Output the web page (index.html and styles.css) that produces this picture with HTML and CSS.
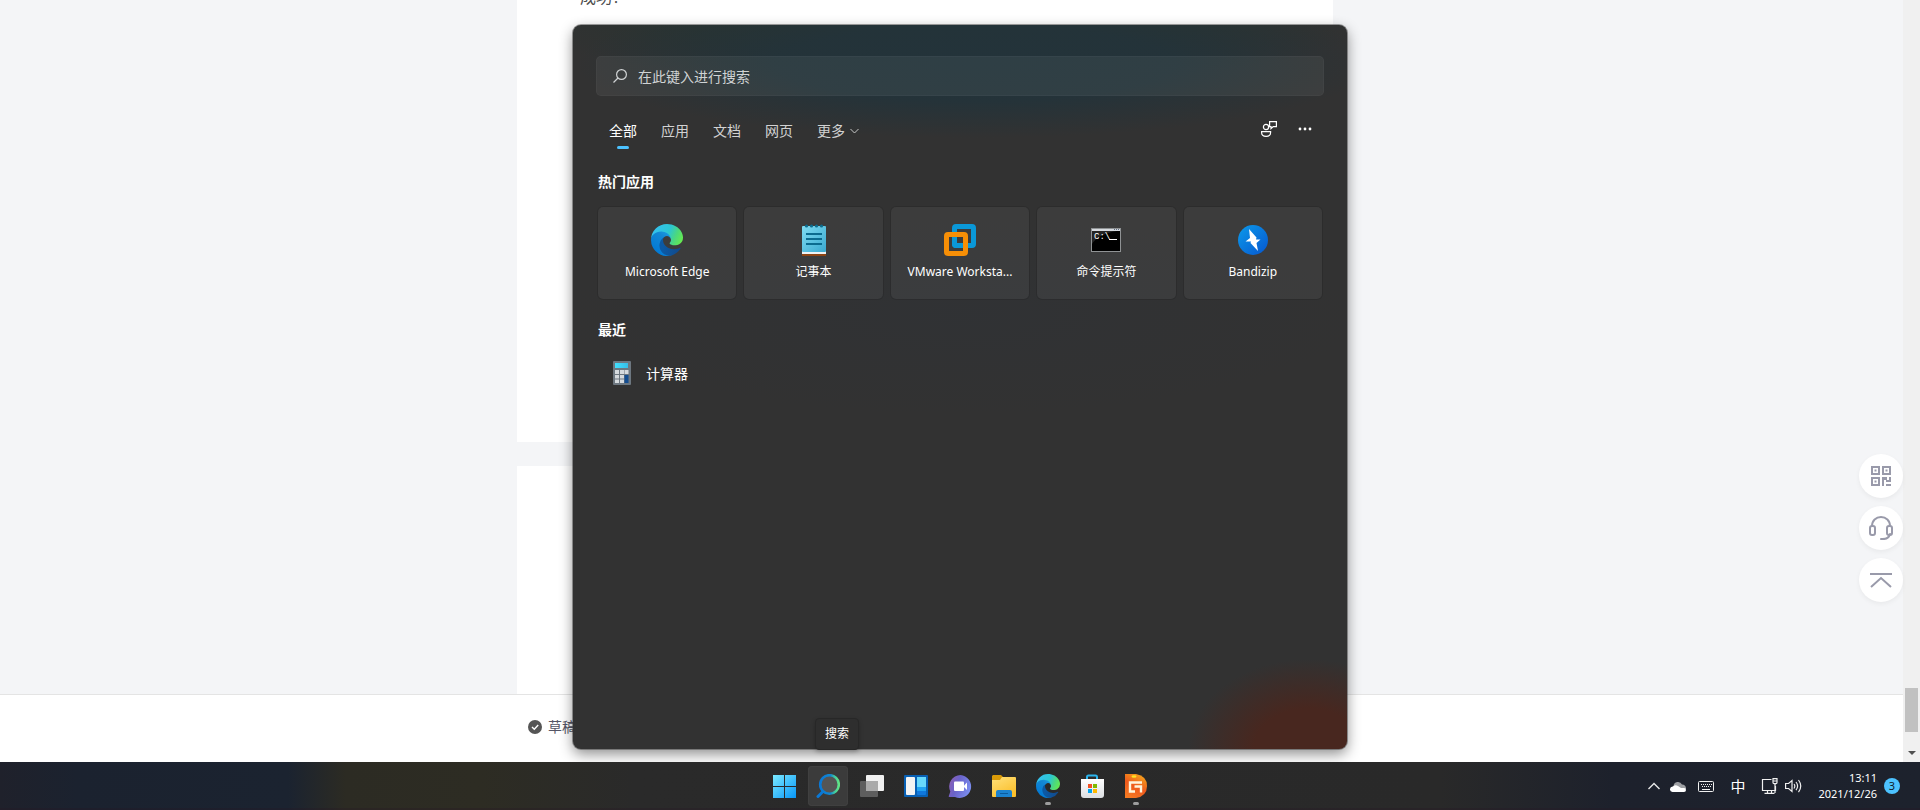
FILE: index.html
```
<!DOCTYPE html>
<html lang="zh-CN">
<head>
  <meta charset="UTF-8">
  <title>搜索</title>
  <link rel="stylesheet" href="styles.css">
</head>
<body>

  <svg class="defs" aria-hidden="true">
    <defs>
      <linearGradient id="edgeDark" x1="0.2" y1="0.5" x2="1" y2="0.6">
        <stop offset="0" stop-color="#0c59a4"/>
        <stop offset="1" stop-color="#114a8b"/>
      </linearGradient>
      <linearGradient id="edgeMid" x1="0.9" y1="0.1" x2="0.3" y2="1">
        <stop offset="0" stop-color="#1b9de2"/>
        <stop offset="0.3" stop-color="#1387d4"/>
        <stop offset="1" stop-color="#0078d4"/>
      </linearGradient>
      <linearGradient id="edgeTop" x1="0" y1="0.4" x2="1" y2="0.7">
        <stop offset="0" stop-color="#35c1f1"/>
        <stop offset="0.5" stop-color="#2cc6d2"/>
        <stop offset="0.75" stop-color="#4bd87f"/>
        <stop offset="1" stop-color="#66eb4e"/>
      </linearGradient>
      <symbol id="edge" viewBox="0 0 256 256">
        <path fill="url(#edgeDark)" d="M231 190.5c-3.4 1.8-6.9 3.4-10.5 4.7a101.5 101.5 0 0 1-35.9 6.4c-47.3 0-88.5-32.5-88.5-74.3 0-11.4 6.4-21.9 16.4-27.2-42.8 1.8-53.8 46.4-53.8 72.5 0 74 68.1 81.4 82.8 81.4 7.9 0 19.8-2.3 27-4.6l1.3-.4a128.3 128.3 0 0 0 66.6-52.8 4 4 0 0 0-5.4-5.7z"/>
        <path fill="url(#edgeMid)" d="M105.7 241.4a79.2 79.2 0 0 1-22.7-21.3 80.7 80.7 0 0 1 29.5-120c3.2-1.5 8.5-4.1 15.6-4a32.4 32.4 0 0 1 25.7 13 31.9 31.9 0 0 1 6.3 18.7c0-.2 24.5-79.6-80-79.6-43.9 0-80 41.6-80 78.2a130.2 130.2 0 0 0 12.1 56 128 128 0 0 0 156.4 67 75.5 75.5 0 0 1-62.8-8z"/>
        <path fill="url(#edgeTop)" d="M152.3 148.9c-.8 1-3.3 2.5-3.3 5.7 0 2.6 1.7 5.1 4.7 7.2 14.4 10 41.5 8.7 41.6 8.7a59.6 59.6 0 0 0 30.3-8.4 61.4 61.4 0 0 0 30.4-52.9c.3-22.4-8-37.3-11.3-43.9C223.5 23.9 177.7 0 128 0A128 128 0 0 0 0 126.2c.5-36.5 36.8-66 80-66 3.5 0 23.5.3 42 10 16.3 8.6 24.9 19 30.8 29.2 6.2 10.7 7.3 24.1 7.3 29.5 0 5.3-2.7 13.3-7.8 19.9z"/>
      </symbol>
      <linearGradient id="note" x1="0" y1="0" x2="1" y2="1">
        <stop offset="0" stop-color="#7fdcf2"/>
        <stop offset="1" stop-color="#3aa9d0"/>
      </linearGradient>
      <linearGradient id="calc" x1="0" y1="0" x2="1" y2="0">
        <stop offset="0" stop-color="#41e0ff"/>
        <stop offset="1" stop-color="#36bde6"/>
      </linearGradient>
      <linearGradient id="bandi" x1="0" y1="0" x2="1" y2="1">
        <stop offset="0" stop-color="#0c9aea"/>
        <stop offset="1" stop-color="#0656cf"/>
      </linearGradient>
      <linearGradient id="win" x1="0" y1="0" x2="1" y2="1">
        <stop offset="0" stop-color="#7beaff"/>
        <stop offset="1" stop-color="#0796f8"/>
      </linearGradient>
      <linearGradient id="lens" x1="0" y1="0.5" x2="1" y2="0.5">
        <stop offset="0" stop-color="#0a78d6"/>
        <stop offset="0.55" stop-color="#1186cf"/>
        <stop offset="0.8" stop-color="#45cf9d"/>
        <stop offset="1" stop-color="#62e385"/>
      </linearGradient>
      <linearGradient id="chat" x1="0" y1="0.2" x2="1" y2="0.6">
        <stop offset="0" stop-color="#8d5fb4"/>
        <stop offset="0.4" stop-color="#6a62c9"/>
        <stop offset="1" stop-color="#7b8ff0"/>
      </linearGradient>
      <linearGradient id="folder" x1="0" y1="0" x2="0.6" y2="1">
        <stop offset="0" stop-color="#ffe07a"/>
        <stop offset="1" stop-color="#fbc02d"/>
      </linearGradient>
      <linearGradient id="bag" x1="0" y1="0" x2="0" y2="1">
        <stop offset="0" stop-color="#ffffff"/>
        <stop offset="1" stop-color="#dcdfe2"/>
      </linearGradient>
      <linearGradient id="diskg" x1="0.7" y1="0" x2="0.2" y2="1">
        <stop offset="0" stop-color="#f6a21c"/>
        <stop offset="0.5" stop-color="#ee5a1c"/>
        <stop offset="1" stop-color="#f57a22"/>
      </linearGradient>
    </defs>
  </svg>

  <main class="browser">
    <div class="page">
      <div class="content">
        <article class="card first"><p>成功！</p></article>
        <section class="card last"></section>
      </div>
      <footer class="draft-bar">
        <div class="draft">
          <svg width="14" height="14" viewBox="0 0 14 14"><circle cx="7" cy="7" r="7" fill="#555"/><path d="M4 7l2.300 2.300L10.200 5" fill="none" stroke="#fff" stroke-width="1.400"/></svg>
          <span>草稿</span>
        </div>
      </footer>
      <nav class="float-tools">
        <button type="button" aria-label="二维码">
          <svg width="20" height="20" viewBox="0 0 20 20" fill="none" stroke="#999aaa" stroke-width="2">
            <path d="M1 1h7v7H1zM12 1h7v7h-7zM1 12h7v7H1z"/>
            <path fill="#999aaa" stroke="none" d="M3.500 3.500h2v2h-2zM14.500 3.500h2v2h-2zM3.500 14.500h2v2h-2zM11 11h5v3h2v-3h2v5h-5v-2h-2v6h-2zM15 18h5v2h-5z"/>
          </svg>
        </button>
        <button type="button" aria-label="客服">
          <svg width="24" height="24" viewBox="0 0 24 24" fill="none" stroke="#999aaa" stroke-width="2" stroke-linecap="round">
            <path d="M3 10C3 4.500 7 1 12 1s9 3.500 9 9M21 18c-1 4-4 5.500-9 5"/>
            <rect x="1" y="10" width="5" height="9" rx="2"/>
            <rect x="18" y="10" width="5" height="9" rx="2"/>
          </svg>
        </button>
        <button type="button" aria-label="返回顶部">
          <svg width="22" height="16" viewBox="0 0 22 16" fill="none" stroke="#999aaa" stroke-width="2"><path d="M0 2h22M1 15L11 6l10 9"/></svg>
        </button>
      </nav>
    </div>
    <div class="scrollbar">
      <div class="thumb"></div>
      <svg width="8" height="4" viewBox="0 0 8 4"><path d="M0 0h8L4 4z" fill="#505050"/></svg>
    </div>

    <div class="overlay">
      <section class="panel">
        <div class="search-box">
          <svg width="14" height="14" viewBox="0 0 14 14" fill="none" stroke="#d0d3d4" stroke-width="1.200"><circle cx="8.500" cy="5.500" r="4.900"/><path d="M5 9L.5 13.500"/></svg>
          <input type="text" aria-label="搜索" placeholder="在此键入进行搜索">
        </div>

        <div class="filter-row">
          <nav class="tabs">
            <button type="button" class="tab active">全部</button>
            <button type="button" class="tab">应用</button>
            <button type="button" class="tab">文档</button>
            <button type="button" class="tab">网页</button>
            <button type="button" class="tab">更多<svg width="9" height="6" viewBox="0 0 9 6" fill="none" stroke="#c8c8c8"><path d="M.5 1l4 4 4-4"/></svg></button>
          </nav>
          <div class="actions">
            <button type="button" aria-label="反馈">
              <svg width="16" height="16" viewBox="0 0 16 16" fill="none" stroke="#fff" stroke-width="1.200">
                <circle cx="5" cy="6" r="2.600"/>
                <path d="M.6 10.600h9v1c0 2.200-1.600 3.800-4.500 3.800S.6 13.800.6 11.600zM8.600.6h6.800v5h-3.200L10 7.600v-2H8.600z"/>
              </svg>
            </button>
            <button type="button" aria-label="选项">
              <svg width="14" height="4" viewBox="0 0 14 4" fill="#fff"><circle cx="2" cy="2" r="1.400"/><circle cx="7" cy="2" r="1.400"/><circle cx="12" cy="2" r="1.400"/></svg>
            </button>
          </div>
        </div>

        <h2>热门应用</h2>
        <div class="tiles">
          <a class="tile" href="#">
            <svg width="32" height="32"><use href="#edge"/></svg>
            <span>Microsoft Edge</span>
          </a>
          <a class="tile" href="#">
            <svg width="32" height="32" viewBox="0 0 32 32">
              <path fill="#8d4413" d="M4 28h24v4H4z"/><path fill="#eef2f4" d="M4 26h24v4H4z"/>
              <rect x="4" y="2" width="24" height="26" rx="1" fill="url(#note)"/>
              <path stroke="#0b6b8f" stroke-width="2" d="M8 10h16M8 15h16M8 20h16"/>
              <g fill="#0d6c8d"><circle cx="8.500" cy="2" r="1.600"/><circle cx="13.500" cy="2" r="1.600"/><circle cx="18.500" cy="2" r="1.600"/><circle cx="23.500" cy="2" r="1.600"/></g>
            </svg>
            <span>记事本</span>
          </a>
          <a class="tile" href="#">
            <svg width="32" height="32" viewBox="0 0 32 32" fill="none" stroke-width="5">
              <rect x="10.500" y="2.500" width="19" height="19" rx="1.500" stroke="#0a98d8"/>
              <rect x="2.500" y="10.500" width="19" height="19" rx="1.500" stroke="#f78f06"/>
              <path stroke="#0a98d8" d="M10.500 13v7q0 1.500 1.500 1.500h3"/>
            </svg>
            <span>VMware Worksta...</span>
          </a>
          <a class="tile" href="#">
            <svg width="32" height="32" viewBox="0 0 32 32">
              <rect x="1.500" y="4.500" width="29" height="23" fill="#000" stroke="#8f9294"/>
              <path fill="#d6dadf" d="M2 5h28v2H2z"/>
              <path fill="#333" d="M2 7h25Q8 10 2 20z" opacity=".7"/>
              <path fill="#5f6c80" d="M24 5h1v1h-1zM26 5h1v1h-1zM28 5h1v1h-1z"/>
              <text x="4" y="15" class="prompt">C:\</text>
              <path stroke="#fff" d="M19 15.500h8"/>
            </svg>
            <span>命令提示符</span>
          </a>
          <a class="tile" href="#">
            <svg width="32" height="32" viewBox="0 0 32 32">
              <circle cx="16" cy="16" r="15" fill="url(#bandi)"/>
              <path fill="#fff" d="M12 5l7.500 8.500-.5 2h4.500L19.500 19 21 27l-7.500-8 .5-1.500H8.500L13 14z"/>
            </svg>
            <span>Bandizip</span>
          </a>
        </div>

        <h2>最近</h2>
        <a class="recent" href="#">
          <svg width="18" height="24" viewBox="0 0 18 24">
            <rect width="18" height="24" rx="1" fill="#6d7780"/>
            <rect x="2" y="2" width="13" height="5" fill="url(#calc)"/>
            <path fill="#d5dade" d="M2 9h4v4H2zM7 9h4v4H7zM11.500 9h4v4h-4zM2 14h4v3.500H2zM7 14h4v3.500H7zM2 18.500h4V22H2zM7 18.500h4V22H7z"/>
            <path fill="#134d91" d="M11.500 14h4v8h-4z"/>
          </svg>
          <span>计算器</span>
        </a>
      </section>
    </div>
  </main>

  <footer class="taskbar">
    <nav class="apps">
      <button type="button" aria-label="开始">
        <svg width="24" height="24" viewBox="0 0 24 24"><path fill="url(#win)" d="M1 1h11v11H1zM13 1h11v11H13zM1 13h11v11H1zM13 13h11v11H13z"/></svg>
      </button>
      <button type="button" class="selected" aria-label="搜索">
        <span class="tooltip">搜索</span>
        <svg width="24" height="24" viewBox="0 0 24 24" fill="none">
          <path d="M7.500 17L2 22.500" stroke="#0a78d6" stroke-width="3" stroke-linecap="round"/>
          <circle cx="13.500" cy="10.500" r="9.300" fill="#555" stroke="url(#lens)" stroke-width="2.600"/>
        </svg>
      </button>
      <button type="button" aria-label="任务视图">
        <svg width="24" height="22" viewBox="0 0 24 22"><rect x="6" width="18" height="16" rx="1" fill="#f1f1f1"/><rect y="6" width="18" height="16" rx="1" fill="#5e5e5e"/><path d="M6 6h12v10H6z" fill="#aaa"/></svg>
      </button>
      <button type="button" aria-label="小组件">
        <svg width="24" height="22" viewBox="0 0 24 22"><rect width="24" height="22" rx="1" fill="#0860b4"/><rect x="2" y="2" width="9" height="18" rx="1" fill="#f3f3f3"/><rect x="13" y="2" width="9" height="18" rx="1" fill="#0f78dd"/><path d="M13 2h9v10h-9z" fill="#67d8fb"/><path d="M13 12h9v4h-9z" fill="#21a3f2"/></svg>
      </button>
      <button type="button" aria-label="聊天">
        <svg width="24" height="24" viewBox="0 0 24 24"><path fill="url(#chat)" d="M12.500 1A11.500 11.500 0 1 1 7 23H1.500q-1 0-.7-1L2.300 17.500A11.500 11.500 0 0 1 12.500 1z"/><rect x="6" y="7.500" width="10" height="9.500" rx="1" fill="#fff"/><path fill="#fff" d="M16 11.500l3-3v7.500l-3-3z"/></svg>
      </button>
      <button type="button" aria-label="文件资源管理器">
        <svg width="24" height="22" viewBox="0 0 24 22"><path fill="#d99a08" d="M1 0h8l2 2v4H0V1z"/><path fill="url(#folder)" d="M10 2h13q1 0 1 1v18q0 1-1 1H1q-1 0-1-1V5h8z"/><path fill="#1b82cf" d="M4 22v-5q0-2 2-2h12q2 0 2 2v5z"/><path stroke="#0b5b9d" d="M8 18.500h8"/></svg>
      </button>
      <button type="button" class="running" aria-label="Microsoft Edge">
        <svg width="24" height="24"><use href="#edge"/></svg>
      </button>
      <button type="button" aria-label="Microsoft Store">
        <svg width="24" height="24" viewBox="0 0 24 24"><path fill="none" stroke="#2cb5ee" stroke-width="2" d="M7 6V3q0-1.500 1.500-1.500h7Q17 1.500 17 3v3"/><path fill="url(#bag)" d="M1 5h23v16q0 3-3 3H4q-3 0-3-3z"/><path fill="#f25022" d="M8 10h4v4H8z"/><path fill="#7fba00" d="M13 10h4v4h-4z"/><path fill="#00a4ef" d="M8 15h4v4H8z"/><path fill="#ffb900" d="M13 15h4v4h-4z"/></svg>
      </button>
      <button type="button" class="running" aria-label="DiskGenius">
        <svg width="24" height="24" viewBox="0 0 24 24"><path fill="url(#diskg)" d="M1 0h11q11 2 11 12t-11 12H1z"/><ellipse cx="10" cy="2.500" rx="2.500" ry="1.200" fill="#ffe326"/><path fill="none" stroke="#fff5dc" stroke-width="2.400" d="M18 8.500H6v9h5M10.500 12.500h6.500v6"/></svg>
      </button>
    </nav>

    <div class="tray">
      <button type="button" aria-label="显示隐藏的图标"><svg width="12" height="8" viewBox="0 0 12 8" fill="none" stroke="#e8e8e8" stroke-width="1.400"><path d="M.5 7L6 1.500 11.500 7"/></svg></button>
      <svg width="16" height="11" viewBox="0 0 16 11"><path fill="#9d9fa3" d="M3.500 5A4.500 4.500 0 0 1 12 3.500 4 4 0 0 1 16 8H2z"/><path fill="#fff" d="M2.500 11A2.700 2.700 0 0 1 3 5.500 4 4 0 0 1 8 5l3 2h3a2 2 0 0 1 0 4z"/></svg>
      <svg class="keyboard" width="16" height="11" viewBox="0 0 16 11" fill="none" stroke="#f0f0f0"><rect x=".5" y=".5" width="15" height="10" rx="1"/><path stroke-dasharray="1 1" d="M3 3.500h11M4 5.500h9"/><path d="M4 8.500h8"/></svg>
      <button type="button" class="ime">中</button>
      <svg width="17" height="16" viewBox="0 0 17 16" fill="none" stroke="#f0f0f0" stroke-width="1.200"><path d="M10.500 1.500h-9v11h13V8M6.500 12.500v2.500M10.500 12.500v2.500M3.500 15.400h10M12 .6h4v4q0 1-1 1h-2q-1 0-1-1zM12 3h4M14 5.600V15"/></svg>
      <svg class="speaker" width="17" height="14" viewBox="0 0 17 14" fill="none" stroke="#f0f0f0" stroke-width="1.200"><path d="M.6 4.500h3L7 1.500v11l-3.400-3h-3zM9 5q1.600 2 0 4.500M11 3q3.200 4 0 8.200M13.500 1q4.500 6 0 12.200"/></svg>
      <div class="clock"><span>13:11</span><span>2021/12/26</span></div>
      <span class="badge">3</span>
    </div>
  </footer>

</body>
</html>
```
FILE: styles.css
```
* {
  margin: 0;
  padding: 0;
  box-sizing: border-box;
}
body {
  font-family: "Noto Sans", "Noto Sans CJK SC", sans-serif;
  font-size: 14px;
  height: 100vh;
  display: flex;
  flex-direction: column;
  overflow: hidden;
}
svg {
  display: block;
  flex-shrink: 0;
}
button {
  background: none;
  border: none;
  font: inherit;
  color: inherit;
  cursor: pointer;
}
a {
  color: inherit;
  text-decoration: none;
}
.defs {
  position: absolute;
  width: 0;
  height: 0;
}

/* page behind the panel */
.browser {
  flex: 1;
  min-height: 0;
  display: flex;
  position: relative;
}
.page {
  flex: 1;
  display: flex;
  flex-direction: column;
  background: #f4f5f7;
  position: relative;
}
.content {
  flex: 1;
  min-height: 0;
  overflow: hidden;
  display: flex;
  flex-direction: column;
  align-items: center;
  gap: 24px;
  padding-right: 53px;
}
.card {
  width: 100%;
  max-width: 816px;
  background: #fff;
}
.card.first {
  min-height: 457px;
  margin-top: -15px;
  padding: 0 63px;
  font-size: 16px;
  line-height: 24px;
  color: #4d4d4d;
}
.card.last {
  flex: 1;
}
.draft-bar {
  border-top: 1px solid #e4e4e4;
  background: #fff;
  display: flex;
  justify-content: center;
  padding: 21px 53px 25px 0;
}
.draft {
  width: 100%;
  max-width: 816px;
  padding-left: 11px;
  display: flex;
  align-items: center;
  gap: 6px;
  line-height: 21px;
  color: #555666;
}
.float-tools {
  position: absolute;
  right: 0;
  bottom: 160px;
  display: flex;
  flex-direction: column;
  gap: 8px;
}
.float-tools button {
  width: 44px;
  height: 44px;
  border-radius: 50%;
  background: #fff;
  box-shadow: 0 2px 5px rgba(0, 0, 0, 0.05);
  display: flex;
  align-items: center;
  justify-content: center;
}
.scrollbar {
  width: 17px;
  background: #f0f0f0;
  display: flex;
  flex-direction: column;
  justify-content: flex-end;
  align-items: center;
  gap: 19px;
  padding-bottom: 7px;
}
.thumb {
  width: 13px;
  height: 44px;
  background: #c1c1c1;
}

/* search panel */
.overlay {
  position: absolute;
  inset: 0;
  display: flex;
  justify-content: center;
  padding: 25px 20px 13px;
  overflow: hidden;
  pointer-events: none;
}
.panel {
  width: 100%;
  max-width: 774px;
  padding: 31px 23px;
  border-radius: 8px;
  color: #fff;
  pointer-events: auto;
  background:
    radial-gradient(ellipse 120px 90px at 95% 100%, #48271f 0%, #48271f 45%, rgba(72, 39, 31, 0) 100%),
    radial-gradient(ellipse 400px 75px at 52% 38px, #23333a 0%, rgba(35, 51, 58, 0.9) 50%, rgba(35, 51, 58, 0) 100%),
    radial-gradient(ellipse 420px 60px at 48% 0, #283330 0%, rgba(40, 51, 48, 0.8) 60%, rgba(40, 51, 48, 0) 100%),
    radial-gradient(ellipse 400px 100px at 50% 290px, rgba(47, 50, 54, 0.6), rgba(47, 50, 54, 0)),
    #323232;
  box-shadow: 0 0 0 1px rgba(70, 70, 70, 0.5), 0 5px 14px rgba(0, 0, 0, 0.45);
}
.search-box {
  height: 40px;
  padding: 0 16px;
  display: flex;
  align-items: center;
  gap: 11px;
  border: 1px solid rgba(255, 255, 255, 0.03);
  border-radius: 5px;
  background: rgba(255, 255, 255, 0.06);
}
.search-box input {
  flex: 1;
  background: none;
  border: none;
  outline: none;
  font: inherit;
  color: #fff;
}
.search-box input::placeholder {
  color: #d0d3d4;
}
.filter-row {
  margin-top: 15px;
  padding: 0 10px 0 13px;
  display: flex;
  justify-content: space-between;
}
.tabs {
  display: flex;
  gap: 24px;
}
.tab {
  height: 40px;
  line-height: 40px;
  display: flex;
  align-items: center;
  gap: 5px;
  color: #d2d2d2;
  position: relative;
}
.tab.active {
  color: #fff;
}
.tab.active::after {
  content: "";
  position: absolute;
  left: 8px;
  bottom: 2px;
  width: 12px;
  height: 3px;
  border-radius: 2px;
  background: #4cc2ff;
}
.actions {
  height: 36px;
  display: flex;
  align-items: center;
  gap: 17px;
}
.actions button {
  padding: 2px;
}
h2 {
  margin: 21px 2px 15px;
  font-size: 14px;
  line-height: 20px;
  font-weight: 700;
}
.tiles {
  display: grid;
  grid-template-columns: repeat(5, 1fr);
  gap: 8px;
  margin: 0 2px;
}
.tile {
  height: 92px;
  padding-top: 17px;
  display: flex;
  flex-direction: column;
  align-items: center;
  gap: 6px;
  border-radius: 5px;
  background: rgba(255, 255, 255, 0.05);
  box-shadow: 0 0 0 1px rgba(0, 0, 0, 0.1);
  font-size: 12px;
  line-height: 20px;
  white-space: nowrap;
}
.prompt {
  font-family: "Liberation Mono", monospace;
  font-size: 9px;
  fill: #fff;
}
.recent {
  height: 36px;
  padding-left: 17px;
  display: flex;
  align-items: center;
  gap: 15px;
}

/* taskbar */
.taskbar {
  height: 48px;
  display: grid;
  grid-template-columns: 1fr auto 1fr;
  align-items: center;
  color: #fff;
  background: linear-gradient(90deg, #1f212b 0, #1b222f 4%, #1b2330 15%, #2c2b23 18%, #2d2c23 25%, #2a2a2a 33%, #292929 75%, #1d212c 84%, #1d222d 100%);
  box-shadow: inset 0 -2px rgba(40, 22, 38, 0.3);
}
.apps {
  grid-column: 2;
  display: flex;
  gap: 4px;
}
.apps button {
  width: 40px;
  height: 40px;
  border-radius: 4px;
  display: flex;
  align-items: center;
  justify-content: center;
  position: relative;
}
.apps .selected {
  background: #3b3b3b;
  box-shadow: inset 0 0 0 1px #404040;
}
.apps .running::after {
  content: "";
  position: absolute;
  left: 17px;
  bottom: 1px;
  width: 6px;
  height: 3px;
  border-radius: 2px;
  background: #9d9d9d;
}
.tooltip {
  position: absolute;
  left: 7px;
  bottom: 56px;
  padding: 5px 9px;
  font-size: 12px;
  line-height: 20px;
  white-space: nowrap;
  border: 1px solid #272727;
  border-radius: 4px;
  background: #2e2e2e;
  box-shadow: 0 2px 4px rgba(0, 0, 0, 0.25);
}
.tray {
  display: flex;
  justify-content: flex-end;
  align-items: center;
  padding-right: 20px;
}
.tray button {
  margin-right: 10px;
}
.keyboard {
  margin: 0 16px 0 12px;
}
.tray .ime {
  font-size: 15px;
  line-height: 20px;
  margin-right: 16px;
}
.speaker {
  margin: 0 16px 0 7px;
}
.clock {
  display: flex;
  flex-direction: column;
  align-items: flex-end;
  font-size: 11px;
  line-height: 16px;
}
.badge {
  width: 16px;
  height: 16px;
  margin-left: 7px;
  border-radius: 50%;
  background: #4cc2ff;
  color: #10202c;
  font-size: 11px;
  line-height: 16px;
  text-align: center;
}
```
